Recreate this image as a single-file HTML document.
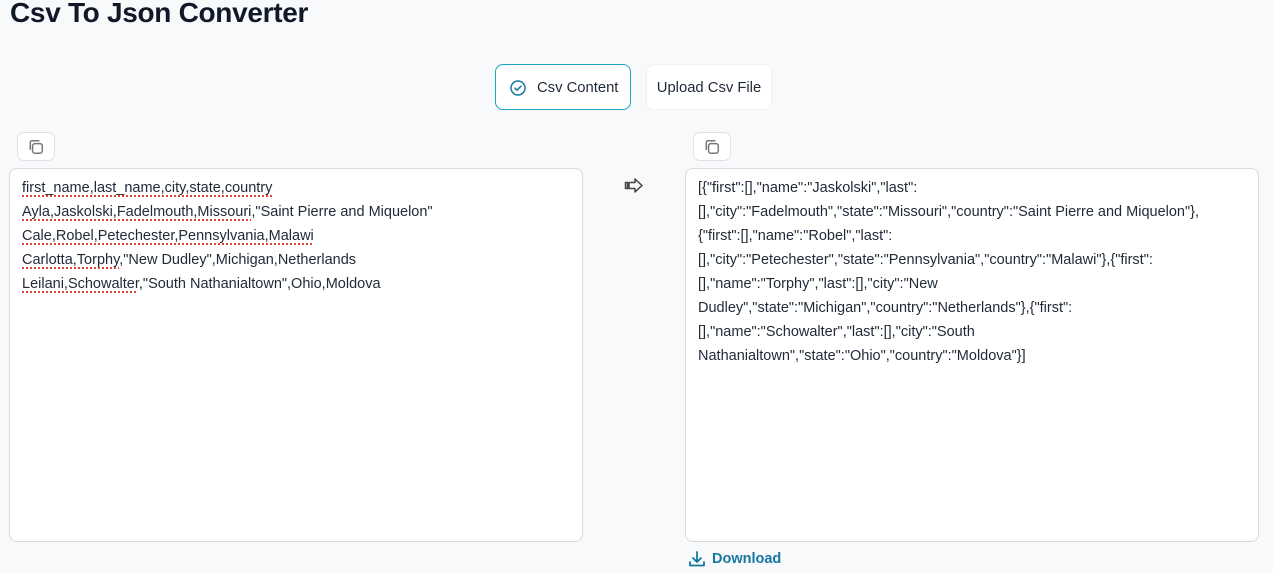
<!DOCTYPE html>
<html><head><style>
body{margin:0;background:#f8f9fb;font-family:"Liberation Sans",Arial,sans-serif;color:#1f2937;width:1273px;height:573px;overflow:hidden;position:relative}
h1{position:absolute;left:10px;top:-3px;margin:0;font-size:28px;font-weight:700;color:#111827;letter-spacing:-0.3px}
.btn{position:absolute;top:64px;height:46px;box-sizing:border-box;border-radius:8px;background:#fff;font-size:14.8px;display:flex;align-items:center;color:#1f2937;padding-top:1px}
.b1{left:495px;width:136px;border:1px solid #1aa3c2;padding-left:14px}
.b2{left:646px;width:126px;border:1px solid #f1f2f4;justify-content:center}
.copy{position:absolute;top:132px;width:38px;height:29px;box-sizing:border-box;border:1px solid #e0e2e6;border-radius:7px;background:#fff;display:flex;align-items:center;justify-content:center}
.ta{position:absolute;top:168px;width:574px;height:374px;box-sizing:border-box;border:1px solid #d8dadf;border-radius:8px;background:#fff;padding:7px 12px;font-size:14.5px;line-height:24px;color:#1f2937}
.sp{text-decoration:underline dotted #e0413a;text-decoration-thickness:1.5px;text-underline-offset:3px}
.dl{position:absolute;left:688px;top:550px;color:#1677a0;font-size:14.5px;font-weight:700;display:flex;align-items:center;gap:6px}
</style></head><body>
<h1>Csv To Json Converter</h1>
<div class="btn b1"><svg width="16" height="16" viewBox="0 0 16 16" style="margin-right:11px"><circle cx="8" cy="8" r="7" fill="none" stroke="#1677a0" stroke-width="1.5"/><path d="M5 8.2l2 2 4-4" fill="none" stroke="#1677a0" stroke-width="1.5" stroke-linecap="round"/></svg>Csv Content</div>
<div class="btn b2">Upload Csv File</div>
<div class="copy" style="left:17px"><svg width="16" height="16" viewBox="0 0 14 14"><rect x="4" y="4" width="8.5" height="8.5" rx="2" fill="none" stroke="#777" stroke-width="1.3"/><path d="M2 9.5V3a1.5 1.5 0 0 1 1.5-1.5H10" fill="none" stroke="#777" stroke-width="1.3"/></svg></div>
<div class="copy" style="left:693px"><svg width="16" height="16" viewBox="0 0 14 14"><rect x="4" y="4" width="8.5" height="8.5" rx="2" fill="none" stroke="#777" stroke-width="1.3"/><path d="M2 9.5V3a1.5 1.5 0 0 1 1.5-1.5H10" fill="none" stroke="#777" stroke-width="1.3"/></svg></div>
<svg style="position:absolute;left:624px;top:177px" width="20" height="17" viewBox="0 0 20 17"><path d="M1.5 5.5h2v6h-2zM5 5.5h6V2l7 6.5-7 6.5v-3.5H5z" fill="none" stroke="#444" stroke-width="1.5" stroke-linejoin="round"/></svg>
<div class="ta" style="left:9px"><span class="sp">first_name,last_name,city,state,country</span><br><span class="sp">Ayla,Jaskolski,Fadelmouth,Missouri</span>,"Saint Pierre and Miquelon"<br><span class="sp">Cale,Robel,Petechester,Pennsylvania,Malawi</span><br><span class="sp">Carlotta,Torphy</span>,"New Dudley",Michigan,Netherlands<br><span class="sp">Leilani,Schowalter</span>,"South Nathanialtown",Ohio,Moldova</div>
<div class="ta" style="left:685px">[{"first":[],"name":"Jaskolski","last":<br>[],"city":"Fadelmouth","state":"Missouri","country":"Saint Pierre and Miquelon"},<br>{"first":[],"name":"Robel","last":<br>[],"city":"Petechester","state":"Pennsylvania","country":"Malawi"},{"first":<br>[],"name":"Torphy","last":[],"city":"New<br>Dudley","state":"Michigan","country":"Netherlands"},{"first":<br>[],"name":"Schowalter","last":[],"city":"South<br>Nathanialtown","state":"Ohio","country":"Moldova"}]</div>
<div class="dl"><svg width="18" height="18" viewBox="0 0 18 18"><path d="M9 2v10M5 8l4 4 4-4M2 12v3.5h14V12" fill="none" stroke="#1677a0" stroke-width="1.8" stroke-linecap="round" stroke-linejoin="round"/></svg>Download</div>
</body></html>
